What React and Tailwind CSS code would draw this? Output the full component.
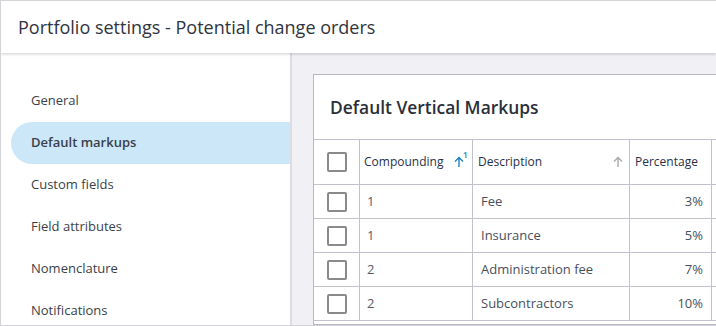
const rows = [
  { c: "1", d: "Fee", p: "3%" },
  { c: "1", d: "Insurance", p: "5%" },
  { c: "2", d: "Administration fee", p: "7%" },
  { c: "2", d: "Subcontractors", p: "10%" },
];

const navItems = ["General", "Default markups", "Custom fields", "Field attributes", "Nomenclature", "Notifications"];

function Checkbox() {
  return <div className="w-[20px] h-[20px] border-2 border-[#8a8a8a] rounded-[2px] bg-white" />;
}

function SortArrow({ className }) {
  return (
    <svg width="10" height="12" viewBox="0 0 10 12" className={className}>
      <path d="M5 11V1.5M1 5.5L5 1.5L9 5.5" fill="none" stroke="currentColor" strokeWidth="1.4" />
    </svg>
  );
}

export default function App() {
  return (
    <div
      className="w-[716px] h-[326px] overflow-hidden flex flex-col border-l border-t border-b border-[#d4d4d8] bg-white"
      style={{ fontFamily: '"Open Sans", sans-serif' }}
    >
      <div className="h-[52px] shrink-0 flex items-center pl-[17px] bg-white shadow-[0_1px_3px_rgba(0,0,0,0.2)] relative z-10">
        <h1 className="text-[18px] text-[#2f3440]">Portfolio settings - Potential change orders</h1>
      </div>
      <div className="flex flex-1 min-h-0">
        <nav className="w-[291px] shrink-0 bg-white pt-[27px] flex flex-col border-r-2 border-[#dcdce2]">
          {navItems.map((n) => (
            <div
              key={n}
              className={
                "h-[42px] shrink-0 flex items-center pl-[20px] ml-[10px] text-[13px] text-[#3a3f4a] " +
                (n === "Default markups" ? "bg-[#cce8f8] rounded-l-full font-semibold" : "")
              }
            >
              {n}
            </div>
          ))}
        </nav>
        <main className="flex-1 bg-[#f0f0f5] pt-[21px] pl-[21px]">
          <div className="bg-white border border-[#b8b8c2] border-r-0 h-full">
            <div className="h-[64px] flex items-center pl-[16px]">
              <h2 className="text-[17.4px] font-semibold text-[#2a2f3a]">Default Vertical Markups</h2>
            </div>
            <div
              className="grid border-t border-[#c2c2ca] text-[#3e4350]"
              style={{ gridTemplateColumns: "46px 113px 157px 82px 1fr" }}
            >
              <div className="h-[45px] flex items-center justify-center border-r border-b border-[#c2c2ca]">
                <Checkbox />
              </div>
              <div className="h-[45px] flex items-center pl-[4px] pr-[4px] border-r border-b border-[#c2c2ca] text-[12px] text-[#263148]">
                <span className="flex-1">Compounding</span>
                <span className="relative text-[#1f7fc4] mr-[4px]">
                  <SortArrow />
                  <span className="absolute -top-[6px] -right-[4px] text-[9px] font-semibold leading-none">1</span>
                </span>
              </div>
              <div className="h-[45px] flex items-center pl-[5px] pr-[6px] border-r border-b border-[#c2c2ca] text-[12px] text-[#263148]">
                <span className="flex-1">Description</span>
                <SortArrow className="text-[#a8a8ae]" />
              </div>
              <div className="h-[45px] flex items-center pl-[5px] border-r border-b border-[#c2c2ca] text-[12px] text-[#263148]">
                Percentage
              </div>
              <div className="h-[45px] border-b border-[#c2c2ca]" />
              {rows.map((r, i) => (
                <div key={i} className="contents text-[13px]">
                  <div className="h-[34px] flex items-center justify-center border-r border-b border-[#c2c2ca]">
                    <Checkbox />
                  </div>
                  <div className="h-[34px] flex items-center pl-[7px] border-r border-b border-[#c2c2ca] text-[#555a66]">{r.c}</div>
                  <div className="h-[34px] flex items-center pl-[8px] border-r border-b border-[#c2c2ca] text-[#4a4f5c]">{r.d}</div>
                  <div className="h-[34px] flex items-center justify-end pr-[8px] border-r border-b border-[#c2c2ca] text-[#4a4f5c]">{r.p}</div>
                  <div className="h-[34px] border-b border-[#c2c2ca]" />
                </div>
              ))}
            </div>
          </div>
        </main>
      </div>
    </div>
  );
}
